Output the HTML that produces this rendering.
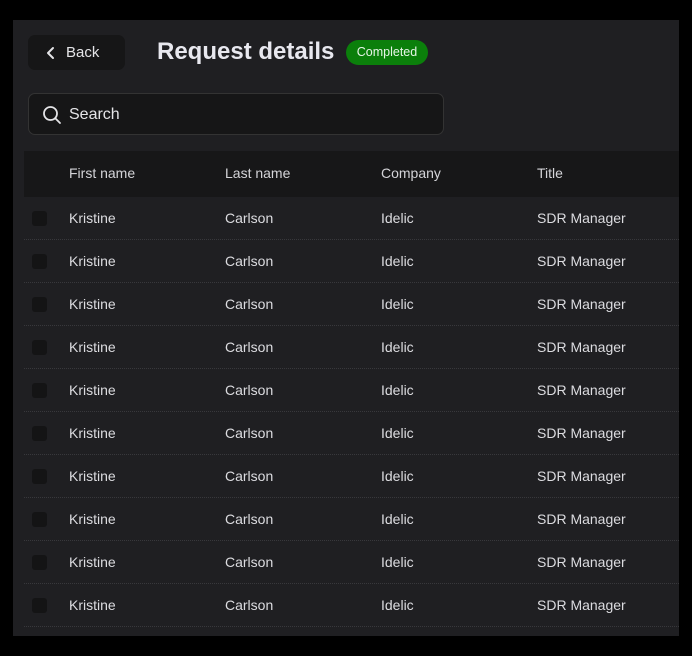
<!DOCTYPE html><html><head><style>
*{margin:0;padding:0;box-sizing:border-box}
body{width:692px;height:656px;background:#000;font-family:"Liberation Sans",sans-serif;position:relative;overflow:hidden}
.panel{position:absolute;left:13px;top:20px;width:666px;height:616px;background:#1f1f22}
.back{position:absolute;left:28px;top:35px;width:97px;height:35px;background:#161617;border-radius:7px;color:#e4e4e7;font-size:15px;line-height:35px;padding-left:38px}
.back svg{position:absolute;left:17px;top:11px}
.title{position:absolute;left:157px;top:38px;font-size:24px;font-weight:bold;color:#e8e8ef}
.badge{position:absolute;left:346px;top:40px;width:82px;height:25px;background:#0b7f0b;border-radius:13px;color:#e8f5e8;font-size:12.5px;line-height:25px;text-align:center}
.search{position:absolute;left:28px;top:93px;width:416px;height:42px;background:#161617;border:1px solid #333;border-radius:7px;color:#e4e4e7;font-size:16px;line-height:42px;padding-left:40px}
.search svg{position:absolute;left:13px;top:11px}
.thead{position:absolute;left:24px;top:151px;width:655px;height:46px;background:#171718}
.cell{position:absolute;font-size:14px;color:#dcdce0}
.th{color:#d4d4d8}
.row{position:absolute;left:24px;width:655px;height:43px;border-bottom:1px dotted #38383c}
.cb{position:absolute;left:8px;top:14px;width:15px;height:15px;background:#141415;border-radius:3px}
</style></head><body>
<div class="panel"></div>
<div class="back"><svg width="12" height="14" viewBox="0 0 12 14"><path d="M8 2L3 7l5 5" stroke="#e4e4e7" stroke-width="2" fill="none" stroke-linecap="round" stroke-linejoin="round"/></svg>Back</div>
<div class="title">Request details</div>
<div class="badge">Completed</div>
<div class="search"><svg width="20" height="20" viewBox="0 0 20 20"><circle cx="8.5" cy="8.5" r="6.5" stroke="#e4e4e7" stroke-width="1.8" fill="none"/><path d="M13.5 13.5L18 18" stroke="#e4e4e7" stroke-width="1.8" stroke-linecap="round"/></svg>Search</div>
<div class="thead">
<div class="cell th" style="left:45px;top:14px">First name</div>
<div class="cell th" style="left:201px;top:14px">Last name</div>
<div class="cell th" style="left:357px;top:14px">Company</div>
<div class="cell th" style="left:513px;top:14px">Title</div>
</div>
<div class="row" style="top:197px"><div class="cb"></div><div class="cell" style="left:45px;top:13px">Kristine</div><div class="cell" style="left:201px;top:13px">Carlson</div><div class="cell" style="left:357px;top:13px">Idelic</div><div class="cell" style="left:513px;top:13px">SDR Manager</div></div>
<div class="row" style="top:240px"><div class="cb"></div><div class="cell" style="left:45px;top:13px">Kristine</div><div class="cell" style="left:201px;top:13px">Carlson</div><div class="cell" style="left:357px;top:13px">Idelic</div><div class="cell" style="left:513px;top:13px">SDR Manager</div></div>
<div class="row" style="top:283px"><div class="cb"></div><div class="cell" style="left:45px;top:13px">Kristine</div><div class="cell" style="left:201px;top:13px">Carlson</div><div class="cell" style="left:357px;top:13px">Idelic</div><div class="cell" style="left:513px;top:13px">SDR Manager</div></div>
<div class="row" style="top:326px"><div class="cb"></div><div class="cell" style="left:45px;top:13px">Kristine</div><div class="cell" style="left:201px;top:13px">Carlson</div><div class="cell" style="left:357px;top:13px">Idelic</div><div class="cell" style="left:513px;top:13px">SDR Manager</div></div>
<div class="row" style="top:369px"><div class="cb"></div><div class="cell" style="left:45px;top:13px">Kristine</div><div class="cell" style="left:201px;top:13px">Carlson</div><div class="cell" style="left:357px;top:13px">Idelic</div><div class="cell" style="left:513px;top:13px">SDR Manager</div></div>
<div class="row" style="top:412px"><div class="cb"></div><div class="cell" style="left:45px;top:13px">Kristine</div><div class="cell" style="left:201px;top:13px">Carlson</div><div class="cell" style="left:357px;top:13px">Idelic</div><div class="cell" style="left:513px;top:13px">SDR Manager</div></div>
<div class="row" style="top:455px"><div class="cb"></div><div class="cell" style="left:45px;top:13px">Kristine</div><div class="cell" style="left:201px;top:13px">Carlson</div><div class="cell" style="left:357px;top:13px">Idelic</div><div class="cell" style="left:513px;top:13px">SDR Manager</div></div>
<div class="row" style="top:498px"><div class="cb"></div><div class="cell" style="left:45px;top:13px">Kristine</div><div class="cell" style="left:201px;top:13px">Carlson</div><div class="cell" style="left:357px;top:13px">Idelic</div><div class="cell" style="left:513px;top:13px">SDR Manager</div></div>
<div class="row" style="top:541px"><div class="cb"></div><div class="cell" style="left:45px;top:13px">Kristine</div><div class="cell" style="left:201px;top:13px">Carlson</div><div class="cell" style="left:357px;top:13px">Idelic</div><div class="cell" style="left:513px;top:13px">SDR Manager</div></div>
<div class="row" style="top:584px"><div class="cb"></div><div class="cell" style="left:45px;top:13px">Kristine</div><div class="cell" style="left:201px;top:13px">Carlson</div><div class="cell" style="left:357px;top:13px">Idelic</div><div class="cell" style="left:513px;top:13px">SDR Manager</div></div>
</body></html>
